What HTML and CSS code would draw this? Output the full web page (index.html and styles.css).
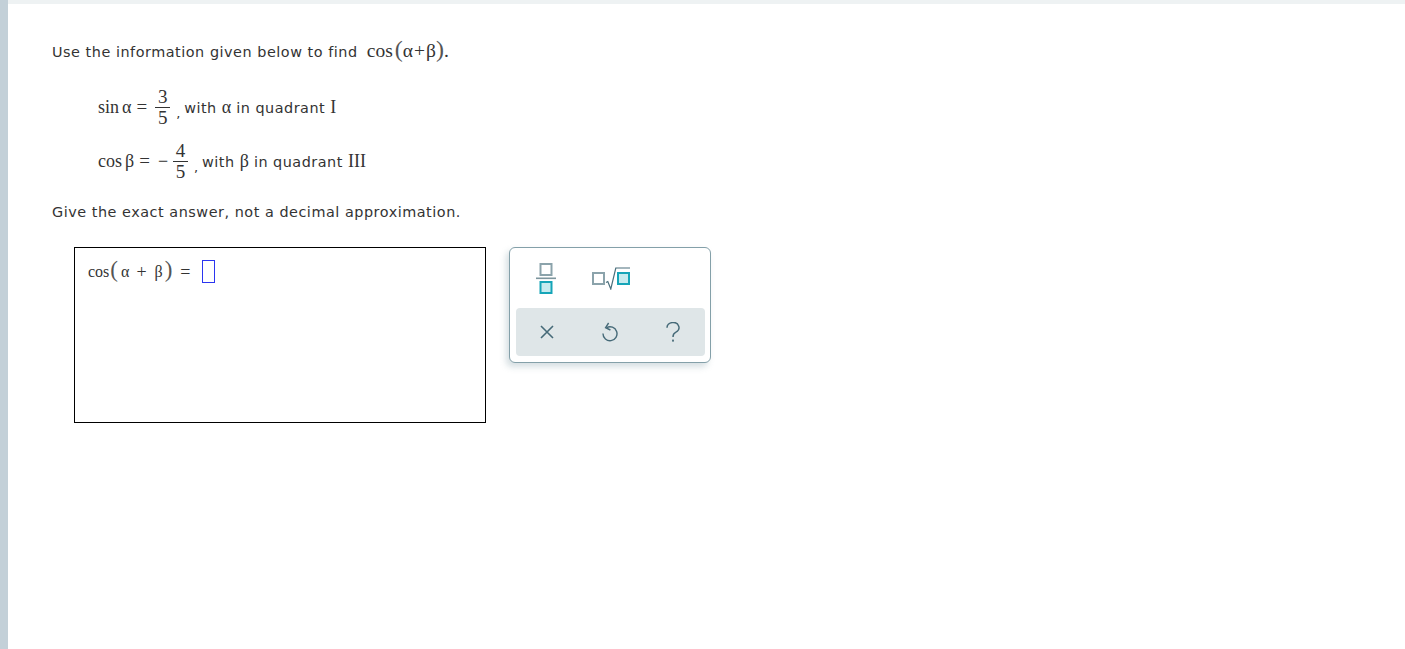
FILE: index.html
```html
<!DOCTYPE html>
<html lang="en">
<head>
<meta charset="utf-8">
<title>Question</title>
<link rel="stylesheet" href="styles.css">
</head>
<body>
<div class="page">
  <aside class="rail"></aside>
  <main class="main">
    <div class="strip"></div>
    <section class="content">
      <p class="line intro">Use the information given below to find <span class="math big gap">cos</span><span class="paren p-open">(</span><span class="math big">α</span><span class="math big plus">+</span><span class="math big">β</span><span class="paren p-close">)</span><span class="math big">.</span></p>

      <div class="given first">
        <span class="math fn">sin</span><span class="math var">α</span><span class="math eq">=</span>
        <span class="frac"><span class="num">3</span><span class="den">5</span></span>
        <span class="comma">,</span>
        <span class="txt">with <span class="math">α</span> in quadrant <span class="math">I</span></span>
      </div>

      <div class="given second">
        <span class="math fn">cos</span><span class="math var">β</span><span class="math eq">=</span><span class="math minus">−</span>
        <span class="frac"><span class="num">4</span><span class="den">5</span></span>
        <span class="comma">,</span>
        <span class="txt">with <span class="math">β</span> in quadrant <span class="math">III</span></span>
      </div>

      <p class="line note">Give the exact answer, not a decimal approximation.</p>

      <div class="answer-row">
        <div class="answer">
          <span class="math ans">cos</span><span class="ans-paren open">(</span><span class="math ans-g">α</span><span class="math ans-op">+</span><span class="math ans-g">β</span><span class="ans-paren close">)</span><span class="math ans-eq">=</span><span class="slot"></span>
        </div>
        <div class="palette">
          <div class="tools">
            <button class="tool t-frac" aria-label="fraction">
              <svg width="20" height="31" viewBox="0 0 20 31"><rect x="4.5" y="1" width="11" height="11" fill="#fff" stroke="#8ba3ab" stroke-width="2"/><rect x="0" y="14.5" width="20" height="1.6" fill="#7d959d"/><rect x="4.5" y="19" width="11" height="11" fill="#c7ebef" stroke="#16a5b8" stroke-width="2"/></svg>
            </button>
            <button class="tool t-root" aria-label="root">
              <svg width="38" height="23" viewBox="0 0 38 23"><rect x="1" y="6" width="11" height="11" fill="#fff" stroke="#8ba3ab" stroke-width="2"/><path d="M14 15.5l1.8 -1 3 7.5 5 -21h14.2" fill="none" stroke="#4a6f7c" stroke-width="1.2"/><rect x="26" y="6" width="11" height="11" fill="#c7ebef" stroke="#16a5b8" stroke-width="2"/></svg>
            </button>
          </div>
          <div class="actions">
            <button class="act" aria-label="clear"><svg width="14" height="14" viewBox="0 0 14 14"><path d="M1 1l12 12M13 1L1 13" fill="none" stroke="#466a78" stroke-width="1.6"/></svg></button>
            <button class="act" aria-label="undo"><svg width="16" height="20" viewBox="0 0 16 20"><path d="M4.6 5.6A7 7 0 1 1 1 11.6" fill="none" stroke="#466a78" stroke-width="1.4"/><path d="M6.6 1L3.6 5.6l4.8 2.4" fill="none" stroke="#466a78" stroke-width="1.4"/></svg></button>
            <button class="act" aria-label="help"><svg width="14" height="20" viewBox="0 0 14 20"><path d="M1 5.8A6 5.2 0 1 1 9.6 10.4C7.6 11.4 7 12.4 7 15" fill="none" stroke="#466a78" stroke-width="1.5"/><rect x="6.1" y="17.6" width="1.8" height="2" fill="#466a78"/></svg></button>
          </div>
        </div>
      </div>
    </section>
  </main>
</div>
</body>
</html>
```

FILE: styles.css
```css
* { box-sizing: border-box; }
html, body { margin: 0; height: 100%; background: #fff; }
body { overflow: hidden; color: #333; font-family: "DejaVu Sans", Verdana, sans-serif; }
.page { display: flex; height: 649px; }
.rail { width: 8px; background: #c3d0d8; flex: none; }
.main { flex: 1; min-width: 0; }
.strip { height: 4px; background: #eef2f3; }
.content { padding: 35px 0 0 44px; }
.line { margin: 0; font-size: 14.4px; line-height: 24px; white-space: nowrap; letter-spacing: 0.53px; }
.math { font-family: "Liberation Serif", "DejaVu Serif", serif; font-size: 18px; letter-spacing: 0; }
.big { font-size: 19.5px; }
.gap { margin-left: 4px; }
.plus { margin: 0 1px; }
.paren { font-family: "Liberation Serif", serif; font-size: 24px; line-height: 20px; letter-spacing: 0; color: #555; }
.p-open { margin: 0 0 0 2px; }
.given { display: flex; align-items: center; margin-left: 46px; height: 44px; font-size: 14.4px; white-space: nowrap; }
.first { margin-top: 21px; }
.second { margin-top: 10px; }
.fn { letter-spacing: 0; }
.var { margin-left: 3px; }
.eq { margin: 0 4px 0 5px; font-size: 19px; }
.minus { margin: 0 1px 0 4px; }
.frac { display: flex; flex-direction: column; align-items: center; width: 15px; margin-left: 4px; font-family: "Liberation Serif", serif; font-size: 19px; line-height: 20px; }
.num { width: 100%; text-align: center; border-bottom: 1px solid #333; }
.den { width: 100%; text-align: center; }
.comma { margin: 12px 0 0 6px; font-size: 13px; width: 8px; }
.txt { letter-spacing: 0.5px; }
.note { margin-top: 17px; }
.answer-row { display: flex; align-items: flex-start; margin: 23px 0 0 22px; }
.answer { display: flex; width: 412px; height: 176px; border: 1px solid #000; padding: 10px 0 0 13px; align-items: flex-start; background: #fff; }
.ans { font-size: 16px; line-height: 28px; }
.ans-paren { font-family: "Liberation Serif", serif; font-size: 23px; line-height: 24px; color: #555; }
.open { margin-left: 1px; }
.ans-g { font-size: 16px; line-height: 28px; margin: 0 2px 0 3px; }
.ans-op { font-size: 18px; line-height: 28px; margin: 0 5px; }
.ans-eq { font-size: 18px; line-height: 28px; margin: 0 11px 0 8px; }
.slot { width: 13px; height: 23px; border: 1px solid #2b35f0; margin-top: 2px; }
.palette { width: 202px; height: 116px; margin-left: 23px; border: 1px solid #84a0a9; border-radius: 6px; background: #fff; box-shadow: -3px 4px 6px rgba(120, 150, 160, .3); padding: 6px 5px 5px 6px; display: flex; flex-direction: column; }
.tools { display: flex; align-items: center; height: 54px; padding: 0 0 6px 20px; gap: 36px; }
.tool, .act { display: flex; align-items: center; justify-content: center; border: 0; padding: 0; background: none; }
.actions { display: flex; justify-content: space-between; align-items: center; height: 48px; background: #dfe6e8; border-radius: 4px; padding: 0 25px 0 24px; }
```
